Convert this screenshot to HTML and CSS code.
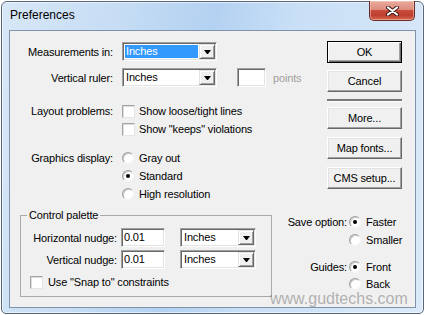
FILE: index.html
```html
<!DOCTYPE html>
<html lang="en">
<head>
    <meta charset="UTF-8">
    <meta name="viewport" content="width=device-width, initial-scale=1.0">
    <title>Preferences</title>
    <link rel="stylesheet" href="styles.css">
</head>
<body>
    <div class="window">
        <div class="titlebar">
            <span class="title">Preferences</span>
            <div class="close">
                <svg width="13" height="10" viewBox="0 0 13 10">
                    <path d="M2 1.5 L11 8.5 M11 1.5 L2 8.5" stroke="#3a1a16" stroke-width="4" stroke-linecap="round"/>
                    <path d="M2 1.5 L11 8.5 M11 1.5 L2 8.5" stroke="#fff" stroke-width="2.2" stroke-linecap="round"/>
                </svg>
            </div>
        </div>

        <div class="client">
            <div class="top">
                <div class="form">
                    <div class="row r1">
                        <span class="label">Measurements in:</span>
                        <div class="select wide selected"><span class="value">Inches</span><span class="drop"><i></i></span></div>
                    </div>
                    <div class="row r2">
                        <span class="label">Vertical ruler:</span>
                        <div class="select wide"><span class="value">Inches</span><span class="drop"><i></i></span></div>
                        <div class="field points-box"></div>
                        <span class="unit">points</span>
                    </div>
                    <div class="row crow first-check">
                        <span class="label">Layout problems:</span>
                        <span class="check"></span><span>Show loose/tight lines</span>
                    </div>
                    <div class="row crow">
                        <span class="label"></span>
                        <span class="check"></span><span>Show "keeps" violations</span>
                    </div>
                    <div class="row crow first-radio">
                        <span class="label">Graphics display:</span>
                        <span class="radio"></span><span>Gray out</span>
                    </div>
                    <div class="row crow">
                        <span class="label"></span>
                        <span class="radio on"></span><span>Standard</span>
                    </div>
                    <div class="row crow">
                        <span class="label"></span>
                        <span class="radio"></span><span>High resolution</span>
                    </div>
                </div>

                <div class="buttons">
                    <div class="btn default">OK</div>
                    <div class="btn">Cancel</div>
                    <div class="separator"></div>
                    <div class="btn">More...</div>
                    <div class="btn">Map fonts...</div>
                    <div class="btn">CMS setup...</div>
                </div>
            </div>

            <div class="bottom">
                <fieldset class="group">
                    <legend>Control palette</legend>
                    <div class="row nrow first-nudge">
                        <span class="nlabel">Horizontal nudge:</span>
                        <div class="field nudge"><span>0.01</span></div>
                        <div class="select small"><span class="value">Inches</span><span class="drop"><i></i></span></div>
                    </div>
                    <div class="row nrow">
                        <span class="nlabel">Vertical nudge:</span>
                        <div class="field nudge"><span>0.01</span></div>
                        <div class="select small"><span class="value">Inches</span><span class="drop"><i></i></span></div>
                    </div>
                    <div class="row snap">
                        <span class="check"></span><span>Use "Snap to" constraints</span>
                    </div>
                </fieldset>

                <div class="options">
                    <div class="row orow">
                        <span class="olabel">Save option:</span>
                        <span class="radio on"></span><span>Faster</span>
                    </div>
                    <div class="row orow">
                        <span class="olabel"></span>
                        <span class="radio"></span><span>Smaller</span>
                    </div>
                    <div class="row orow guides">
                        <span class="olabel">Guides:</span>
                        <span class="radio on"></span><span>Front</span>
                    </div>
                    <div class="row orow back">
                        <span class="olabel"></span>
                        <span class="radio"></span><span>Back</span>
                    </div>
                </div>
            </div>
        </div>

        <span class="watermark">www.gudtechs.com</span>
    </div>
</body>
</html>
```

FILE: styles.css
```css
body {
    margin: 0;
    background: #fff;
    font-family: "Liberation Sans", Arial, sans-serif;
    font-size: 11px;
    letter-spacing: -0.15px;
    color: #000;
}
.window {
    position: relative;
    box-sizing: border-box;
    width: 423px;
    height: 313px;
    margin: 1px 0 0 1px;
    padding: 0 7px 5px 7px;
    border: 1px solid #56657a;
    border-radius: 6px 6px 5px 5px;
    background: linear-gradient(100deg, #d7e7f7 0%, #c6ddf4 25%, #b3d1f1 45%, #c8dff6 62%, #dbeaf9 100%);
    box-shadow: inset 0 0 0 1px rgba(255, 255, 255, 0.6);
    display: flex;
    flex-direction: column;
}
.titlebar {
    height: 28px;
    display: flex;
    align-items: flex-start;
    justify-content: space-between;
}
.title {
    font-size: 12px;
    letter-spacing: 0;
    line-height: 15px;
    margin: 6px 0 0 1px;
}
.close {
    width: 46px;
    height: 20px;
    box-sizing: border-box;
    margin: -1px 1px 0 0;
    border: 1px solid #6b2d27;
    border-top: none;
    border-radius: 0 0 5px 5px;
    background: linear-gradient(#e9aa9c 0%, #dd8d7e 45%, #c94b3b 50%, #bd3f2f 75%, #d8674f 100%);
    box-shadow: inset 0 0 0 1px rgba(255, 220, 210, 0.45);
    display: flex;
    align-items: center;
    justify-content: center;
}
.client {
    flex: 1;
    border: 1px solid #8093ab;
    background: #f0f0f0;
    display: flex;
    flex-direction: column;
}
.top {
    display: flex;
    padding: 10px 13px 0 0;
}
.form {
    flex: 1;
    padding-top: 1px;
}
.row {
    display: flex;
    align-items: center;
    white-space: nowrap;
}
.label {
    width: 103px;
    flex: none;
    text-align: right;
    margin-right: 9px;
}
.r1, .r2 {
    height: 19px;
}
.r2 {
    margin-top: 7px;
}
.crow {
    height: 18px;
}
.first-check {
    margin-top: 15px;
}
.first-radio {
    margin-top: 11px;
}

/* sunken controls */
.select, .field {
    box-sizing: border-box;
    height: 19px;
    background: #fff;
    border: 1px solid;
    border-color: #a0a0a0 #fff #fff #a0a0a0;
    box-shadow: inset 1px 1px 0 #696969, inset -1px -1px 0 #e3e3e3;
}
.select {
    display: flex;
    padding: 1px;
}
.select.wide {
    width: 95px;
}
.select.small {
    width: 76px;
    margin-left: 15px;
}
.value {
    flex: 1;
    line-height: 15px;
    padding-left: 2px;
}
.selected .value {
    background: #3399ff;
    color: #fff;
    margin: 1px;
    line-height: 13px;
    padding-left: 1px;
}
.drop {
    width: 16px;
    box-sizing: border-box;
    background: #f0f0f0;
    border: 1px solid;
    border-color: #e3e3e3 #696969 #696969 #e3e3e3;
    box-shadow: inset 1px 1px 0 #fff, inset -1px -1px 0 #a0a0a0;
    display: flex;
    align-items: center;
    justify-content: center;
}
.drop i {
    width: 1px;
    border-left: 3px solid transparent;
    border-right: 3px solid transparent;
    border-top: 4px solid #000;
}
.points-box {
    width: 29px;
    margin-left: 20px;
}
.unit {
    margin-left: 7px;
    color: #a0a0a0;
}
.check {
    width: 13px;
    height: 13px;
    box-sizing: border-box;
    flex: none;
    background: #fff;
    border: 1px solid;
    border-color: #a5a5a5 #e6e6e6 #e6e6e6 #a5a5a5;
    box-shadow: inset 1px 1px 0 #dcdcdc;
    margin-right: 4px;
}
.radio {
    width: 12px;
    height: 12px;
    box-sizing: border-box;
    flex: none;
    border-radius: 50%;
    background: #fff;
    border: 1px solid;
    border-color: #a0a0a0 #f4f4f4 #f4f4f4 #a0a0a0;
    box-shadow: inset 1px 1px 0 #c8c8c8;
    margin-right: 5px;
    display: flex;
    align-items: center;
    justify-content: center;
}
.radio.on::after {
    content: "";
    width: 4px;
    height: 4px;
    border-radius: 50%;
    background: #000;
}

/* buttons */
.buttons {
    width: 75px;
    display: flex;
    flex-direction: column;
}
.btn {
    box-sizing: border-box;
    height: 22px;
    margin-top: 8px;
    background: #f0f0f0;
    border: 1px solid;
    border-color: #fff #696969 #696969 #fff;
    box-shadow: inset -1px -1px 0 #a0a0a0, inset 1px 1px 0 #e3e3e3;
    display: flex;
    align-items: center;
    justify-content: center;
}
.btn:first-child {
    margin-top: 0;
}
.btn:nth-child(2) {
    margin-top: 7px;
}
.btn.default {
    border-color: #000;
    box-shadow: inset 1px 1px 0 #fff, inset -1px -1px 0 #696969, inset -2px -2px 0 #a0a0a0;
}
.separator {
    height: 2px;
    margin-top: 7px;
    background: #7a7a7a;
    border-bottom: 1px solid #fff;
}
.separator + .btn {
    margin-top: 5px;
}

/* bottom part */
.bottom {
    display: flex;
    align-items: flex-start;
    margin-top: 5px;
}
.group {
    box-sizing: border-box;
    width: 252px;
    margin: 0 0 0 10px;
    padding: 0 0 5px 0;
    min-inline-size: 0;
    border: 1px solid #a9a9a9;
}
.group legend {
    padding: 0 2px;
    margin-left: 6px;
    line-height: 14px;
}
.nrow {
    height: 19px;
    margin-top: 3px;
}
.first-nudge {
    margin-top: 6px;
}
.nlabel {
    width: 96px;
    flex: none;
    text-align: right;
    margin-right: 4px;
}
.nudge {
    width: 44px;
    padding-left: 2px;
    line-height: 16px;
}
.snap {
    height: 18px;
    margin-top: 4px;
    padding-left: 9px;
}
.snap .check {
    margin-right: 5px;
}
.options {
    margin: 5px 0 0 8px;
}
.orow {
    height: 18px;
}
.olabel {
    width: 67px;
    flex: none;
    text-align: right;
    margin-right: 2px;
}
.guides {
    margin-top: 9px;
    height: 17px;
}
.back {
    height: 17px;
}
.watermark {
    position: absolute;
    left: 268px;
    top: 288px;
    font-size: 16px;
    line-height: 18px;
    letter-spacing: 0;
    color: rgba(120, 120, 120, 0.55);
}
```
